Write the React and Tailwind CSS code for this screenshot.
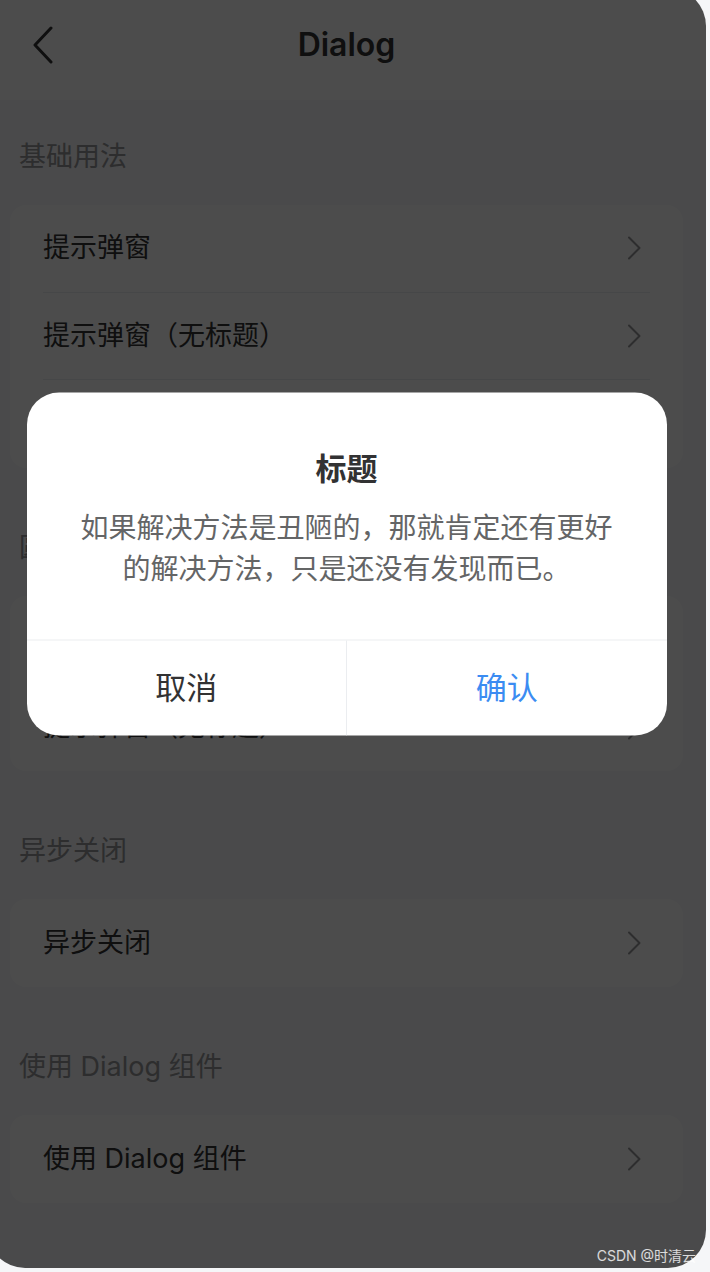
import React from 'react'

const sections = [
  { title: '基础用法', items: ['提示弹窗', '提示弹窗（无标题）', '确认弹窗'], first: true },
  { title: '圆角按钮样式', items: ['提示弹窗', '提示弹窗（无标题）'] },
  { title: '异步关闭', items: ['异步关闭'] },
  { title: '使用 Dialog 组件', items: ['使用 Dialog 组件'] },
]

function Chevron() {
  return (
    <svg width="14" height="24" viewBox="0 0 14 24" fill="none" className="mr-[9px] shrink-0">
      <path d="M2 1.5 L12.5 12 L2 22.5" stroke="#969799" strokeWidth="2" strokeLinecap="round" strokeLinejoin="round" />
    </svg>
  )
}

function Cell({ label, last }) {
  return (
    <div className="px-[33px]">
      <div
        className={
          'flex h-[87.7px] items-center justify-between ' +
          (last ? '' : 'border-b border-[#ebedf0]')
        }
      >
        <span className="text-[27px] text-[#323233]">{label}</span>
        <Chevron />
      </div>
    </div>
  )
}

export default function App() {
  return (
    <div
      className="relative h-[1272px] w-[710px] overflow-hidden bg-[#f5f6f8]"
      style={{ fontFamily: 'Inter, "Noto Sans CJK SC", sans-serif' }}
    >
      <div className="relative -ml-[13px] -mt-[12px] h-[1280px] w-[719px] overflow-hidden rounded-[38px] bg-[#f7f8fa]">
        {/* nav bar */}
        <div className="flex h-[112px] items-center bg-white pt-[12px] pb-[10px]">
          <div className="flex w-[120px] pl-[45px]">
            <svg width="22" height="38" viewBox="0 0 22 38" fill="none">
              <path d="M19 2 L3 19 L19 36" stroke="#323233" strokeWidth="3" strokeLinecap="round" strokeLinejoin="round" />
            </svg>
          </div>
          <div className="flex-1 text-center text-[32px] font-semibold text-[#323233]">Dialog</div>
          <div className="w-[120px]" />
        </div>

        {sections.map((s) => (
          <div key={s.title}>
            <div
              className={
                'px-[32px] pb-[32px] text-[27px] leading-[32px] text-[#969799] ' +
                (s.first ? 'pt-[41px]' : 'pt-[64px]')
              }
            >
              {s.title}
            </div>
            <div className="mx-[23px] overflow-hidden rounded-[16px] bg-white">
              {s.items.map((it, i) => (
                <Cell key={it + i} label={it} last={i === s.items.length - 1} />
              ))}
            </div>
          </div>
        ))}

        {/* overlay + dialog */}
        <div className="absolute inset-0 bg-black/70" />
        <div className="absolute left-1/2 top-[45%] w-[640px] -translate-x-1/2 -translate-y-1/2 overflow-hidden rounded-[32px] bg-white">
          <div className="pt-[53px] text-center text-[31px] font-semibold leading-[46px] text-[#323233]">
            标题
          </div>
          <div className="px-[46px] pt-[16px] pb-[50px] text-center text-[28px] leading-[41px] text-[#646566]">
            如果解决方法是丑陋的，那就肯定还有更好
            <br />
            的解决方法，只是还没有发现而已。
          </div>
          <div className="flex h-[96px] border-t border-[#ebedf0]">
            <div className="flex flex-1 items-center justify-center text-[31px] text-[#323233]">取消</div>
            <div className="flex flex-1 items-center justify-center border-l border-[#ebedf0] text-[31px] text-[#3b8cf2]">
              确认
            </div>
          </div>
        </div>
      </div>

      <div className="absolute bottom-[7px] right-[14px] text-[14px] leading-[18px] text-white/80">
        CSDN @时清云
      </div>
    </div>
  )
}
